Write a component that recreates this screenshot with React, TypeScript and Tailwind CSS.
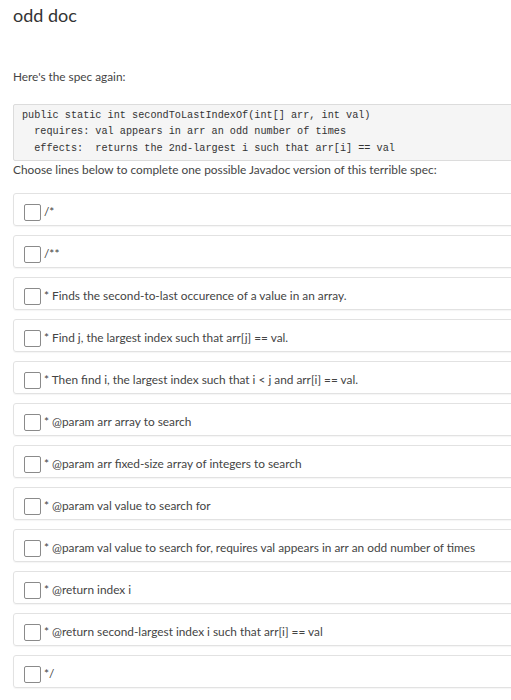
import React from 'react';

const lines: string[] = [
  '/*',
  '/**',
  '* Finds the second-to-last occurence of a value in an array.',
  '* Find j, the largest index such that arr[j] == val.',
  '* Then find i, the largest index such that i < j and arr[i] == val.',
  '* @param arr array to search',
  '* @param arr fixed-size array of integers to search',
  '* @param val value to search for',
  '* @param val value to search for, requires val appears in arr an odd number of times',
  '* @return index i',
  '* @return second-largest index i such that arr[i] == val',
  '*/',
];

const App: React.FC = () => {
  return (
    <div className="w-[511px] h-[700px] overflow-hidden bg-white text-[#444]" style={{ fontFamily: 'Lato, "Open Sans", sans-serif' }}>
      <div className="w-[540px] pl-[13px] pt-[2px]">
        <h1 className="text-[18px] leading-[26px] text-[#333]">odd doc</h1>

        <p className="mt-[41px] text-[11.8px] leading-[16px]">Here's the spec again:</p>

        <pre
          className="mt-[19px] bg-[#f5f5f5] border border-[#dcdcdc] rounded-[2px] pl-[8px] pt-[3px] pb-[3px] text-[10.2px] leading-[16.3px] text-[#333]"
          style={{ fontFamily: '"Liberation Mono", "DejaVu Sans Mono", monospace' }}
        >
{`public static int secondToLastIndexOf(int[] arr, int val)
  requires: val appears in arr an odd number of times
  effects:  returns the 2nd-largest i such that arr[i] == val`}
        </pre>

        <p className="mt-[1px] text-[11.85px] leading-[16px]">
          Choose lines below to complete one possible Javadoc version of this terrible spec:
        </p>

        <div className="mt-[15px] flex flex-col gap-[9px]">
          {lines.map((line, i) => (
            <div
              key={i}
              className="flex items-start border border-[#e2e2e2] rounded-[3px] pl-[10px] pt-[10px] pb-[4px] shadow-[0_1px_1px_rgba(0,0,0,0.04)]"
            >
              <span className="w-[17px] h-[17px] shrink-0 border border-[#8a8a8a] rounded-[2px] bg-white" />
              <span className="ml-[3px] text-[11.85px] leading-[15px] text-[#444] whitespace-pre">{line}</span>
            </div>
          ))}
        </div>
      </div>
    </div>
  );
};

export default App;
